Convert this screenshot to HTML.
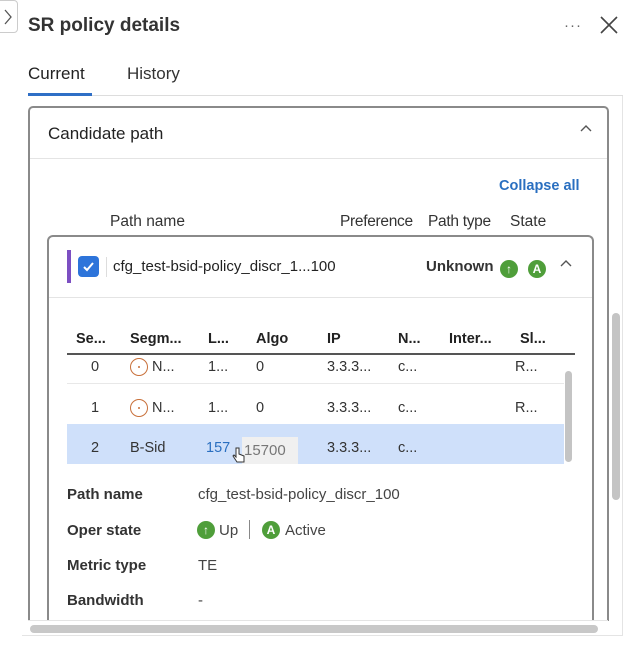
<!DOCTYPE html>
<html><head><meta charset="utf-8"><style>
*{margin:0;padding:0;box-sizing:border-box}
body{width:642px;height:658px;background:#fff;position:relative;overflow:hidden;font-family:"Liberation Sans",Arial,sans-serif;color:#222}
.a{position:absolute;white-space:nowrap}
.b{font-weight:bold}
.ic{position:absolute;width:18px;height:18px;border-radius:50%;background:#4f9e3a;color:#fff;font-size:12px;font-weight:bold;text-align:center;line-height:18px}
.seg{position:absolute;width:18px;height:18px;border:1.5px solid #c8703a;border-radius:50%}
.seg:after{content:"";position:absolute;left:6.5px;top:6.5px;width:2px;height:2px;background:#c8703a;border-radius:50%}
</style></head><body>
<div class="a" style="left:-2px;top:0;width:20px;height:33px;border:1px solid #ccc;border-radius:0 4px 4px 0"></div>
<svg class="a" style="left:3px;top:9px" width="10" height="16"><path d="M2 1 L8 8 L2 15" stroke="#555" stroke-width="1.3" fill="none"/></svg>
<div class="a b" style="left:28px;top:15px;font-size:19px;color:#333">SR policy details</div>
<div class="a" style="left:564px;top:17px;font-size:15px;color:#666;letter-spacing:1px">···</div>
<svg class="a" style="left:600px;top:16px" width="18" height="18"><path d="M1 1L17 17M17 1L1 17" stroke="#444" stroke-width="1.6"/></svg>
<div class="a" style="left:28px;top:64px;font-size:17px;color:#222">Current</div>
<div class="a" style="left:127px;top:64px;font-size:17px;color:#333">History</div>
<div class="a" style="left:28px;top:95px;width:595px;height:1px;background:#ddd"></div>
<div class="a" style="left:28px;top:93px;width:64px;height:3px;background:#2f6fc6"></div>
<div class="a" style="left:622px;top:96px;width:1px;height:540px;background:#e4e4e4"></div>
<div class="a" style="left:22px;top:635px;width:601px;height:1px;background:#e4e4e4"></div>
<div class="a" style="left:612px;top:313px;width:8px;height:187px;background:#c4c4c4;border-radius:4px"></div>
<div class="a" style="left:28px;top:106px;width:581px;height:515px;border:2px solid #8a8a8a;border-bottom:none;border-radius:5px 5px 0 0"></div>
<div class="a" style="left:48px;top:124px;font-size:17px;font-weight:500;color:#222">Candidate path</div>
<svg class="a" style="left:580px;top:124px" width="12" height="8"><path d="M1 7L6 2L11 7" stroke="#555" stroke-width="1.4" fill="none"/></svg>
<div class="a" style="left:30px;top:158px;width:577px;height:1px;background:#e4e4e4"></div>
<div class="a b" style="left:499px;top:178px;font-size:14.5px;color:#2a6fc0">Collapse all</div>
<div class="a" style="left:110px;top:213px;font-size:15.5px;color:#333">Path name</div>
<div class="a" style="left:340px;top:213px;font-size:15.5px;color:#333;letter-spacing:-0.3px">Preference</div>
<div class="a" style="left:428px;top:213px;font-size:15.5px;color:#333;letter-spacing:-0.3px">Path type</div>
<div class="a" style="left:510px;top:213px;font-size:15.5px;color:#333">State</div>
<div class="a" style="left:47px;top:235px;width:547px;height:386px;border:2px solid #8a8a8a;border-bottom:none;border-radius:6px 6px 0 0"></div>
<div class="a" style="left:67px;top:250px;width:4px;height:33px;background:#7c4fc2"></div>
<div class="a" style="left:78px;top:256px;width:21px;height:21px;background:#2d74da;border-radius:4px"></div>
<svg class="a" style="left:82px;top:261px" width="13" height="11"><path d="M2 6L5 9L11 2" stroke="#fff" stroke-width="2" fill="none"/></svg>
<div class="a" style="left:106px;top:257px;width:1px;height:20px;background:#ddd"></div>
<div class="a" style="left:113px;top:258px;font-size:15px;font-weight:500;color:#222">cfg_test-bsid-policy_discr_1...100</div>
<div class="a b" style="left:426px;top:258px;font-size:15px;color:#333">Unknown</div>
<div class="ic" style="left:500px;top:260px">↑</div>
<div class="ic" style="left:528px;top:260px">A</div>
<svg class="a" style="left:560px;top:259px" width="12" height="8"><path d="M1 7L6 2L11 7" stroke="#555" stroke-width="1.4" fill="none"/></svg>
<div class="a" style="left:49px;top:297px;width:543px;height:1px;background:#e4e4e4"></div>
<div class="a b" style="left:76px;top:331px;font-size:14.5px">Se...</div>
<div class="a b" style="left:130px;top:331px;font-size:14.5px">Segm...</div>
<div class="a b" style="left:208px;top:331px;font-size:14.5px">L...</div>
<div class="a b" style="left:256px;top:331px;font-size:14.5px">Algo</div>
<div class="a b" style="left:327px;top:331px;font-size:14.5px">IP</div>
<div class="a b" style="left:398px;top:331px;font-size:14.5px">N...</div>
<div class="a b" style="left:449px;top:331px;font-size:14.5px">Inter...</div>
<div class="a b" style="left:520px;top:331px;font-size:14.5px">Sl...</div>
<div class="a" style="left:67px;top:353px;width:508px;height:2px;background:#555"></div>
<div class="a" style="left:67px;top:383px;width:497px;height:1px;background:#e8e8e8"></div>
<div class="a" style="left:67px;top:424px;width:497px;height:40px;background:#cfe0fa"></div>
<div class="a" style="left:565px;top:371px;width:7px;height:91px;background:#c4c4c4;border-radius:4px"></div>
<div style="font-size:14.5px;color:#333">
<div class="a" style="left:91px;top:359px">0</div>
<div class="seg" style="left:130px;top:358px"></div>
<div class="a" style="left:152px;top:359px">N...</div>
<div class="a" style="left:208px;top:359px">1...</div>
<div class="a" style="left:256px;top:359px">0</div>
<div class="a" style="left:327px;top:359px">3.3.3...</div>
<div class="a" style="left:398px;top:359px">c...</div>
<div class="a" style="left:515px;top:359px">R...</div>
<div class="a" style="left:91px;top:400px">1</div>
<div class="seg" style="left:130px;top:399px"></div>
<div class="a" style="left:152px;top:400px">N...</div>
<div class="a" style="left:208px;top:400px">1...</div>
<div class="a" style="left:256px;top:400px">0</div>
<div class="a" style="left:327px;top:400px">3.3.3...</div>
<div class="a" style="left:398px;top:400px">c...</div>
<div class="a" style="left:515px;top:400px">R...</div>
<div class="a" style="left:91px;top:440px">2</div>
<div class="a" style="left:130px;top:440px">B-Sid</div>
<div class="a" style="left:206px;top:440px;color:#2a6fc0">157</div>
<div class="a" style="left:327px;top:440px">3.3.3...</div>
<div class="a" style="left:398px;top:440px">c...</div>
</div>
<div class="a" style="left:242px;top:437px;width:56px;height:27px;background:#f0f0f0;color:#777;font-size:15px;padding:5px 0 0 2px">15700</div>
<svg class="a" style="left:232px;top:446px" width="14" height="18"><path d="M4 2v9l-2-2-1 1 4 6h7v-6l-5-2v-6z" fill="#fff" stroke="#333" stroke-width="1"/></svg>
<div style="font-size:15px">
<div class="a b" style="left:67px;top:486px;color:#333">Path name</div>
<div class="a" style="left:198px;top:486px;color:#444">cfg_test-bsid-policy_discr_100</div>
<div class="a b" style="left:67px;top:522px;color:#333">Oper state</div>
<div class="ic" style="left:197px;top:521px">↑</div>
<div class="a" style="left:219px;top:522px;color:#444">Up</div>
<div class="a" style="left:249px;top:520px;width:1px;height:19px;background:#888"></div>
<div class="ic" style="left:262px;top:521px">A</div>
<div class="a" style="left:285px;top:522px;color:#444">Active</div>
<div class="a b" style="left:67px;top:557px;color:#333">Metric type</div>
<div class="a" style="left:198px;top:557px;color:#444">TE</div>
<div class="a b" style="left:67px;top:592px;color:#333">Bandwidth</div>
<div class="a" style="left:198px;top:592px;color:#444">-</div>
</div>
<div class="a" style="left:28px;top:620px;width:580px;height:1px;background:#e4e4e4"></div>
<div class="a" style="left:30px;top:625px;width:568px;height:8px;background:#c8c8c8;border-radius:4px"></div>
</body></html>
